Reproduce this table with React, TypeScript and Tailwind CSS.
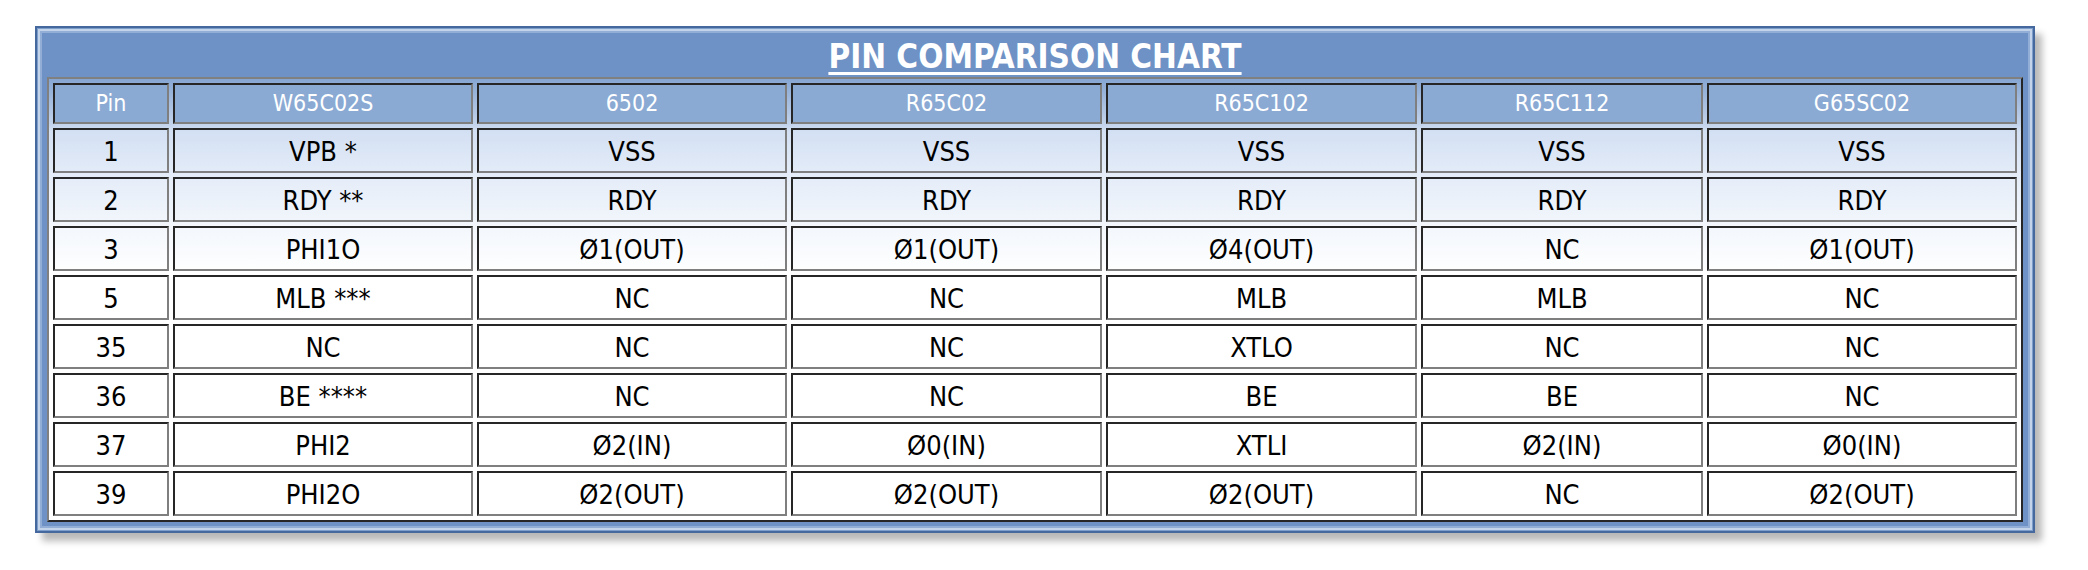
const columns = ["Pin", "W65C02S", "6502", "R65C02", "R65C102", "R65C112", "G65SC02"]
const widths = ["w-[116px]", "w-[300px]", "w-[310px]", "w-[311px]", "w-[311px]", "w-[282px]", "w-[310px]"]

const rows = [
     ["1", "VPB *", "VSS", "VSS", "VSS", "VSS", "VSS"],
     ["2", "RDY **", "RDY", "RDY", "RDY", "RDY", "RDY"],
     ["3", "PHI1O", "Ø1(OUT)", "Ø1(OUT)", "Ø4(OUT)", "NC", "Ø1(OUT)"],
     ["5", "MLB ***", "NC", "NC", "MLB", "MLB", "NC"],
     ["35", "NC", "NC", "NC", "XTLO", "NC", "NC"],
     ["36", "BE ****", "NC", "NC", "BE", "BE", "NC"],
     ["37", "PHI2", "Ø2(IN)", "Ø0(IN)", "XTLI", "Ø2(IN)", "Ø0(IN)"],
     ["39", "PHI2O", "Ø2(OUT)", "Ø2(OUT)", "Ø2(OUT)", "NC", "Ø2(OUT)"],
]

const cellBorder = "border-2 border-t-[#262626] border-l-[#262626] border-r-[#7f7f7f] border-b-[#7f7f7f]"

export default function App() {
     return (
          <div className="w-[2088px] h-[570px] bg-white pt-[26px] pl-[35px] font-['DejaVu_Sans_Condensed','DejaVu_Sans',sans-serif]">
               <div className="w-[2000px] h-[507px] border-2 border-[#45699f] bg-[#6e92c5] px-[10px] pb-[9px] shadow-[inset_0_0_0_1px_#7d9dcb,inset_0_0_0_3px_#c2d3ea,inset_0_0_0_5px_#93aed6,7px_8px_7px_rgba(0,0,0,0.28)]">
                    <div className="h-[49px] pt-[7px] flex items-center justify-center">
                         <h1 className="text-white font-bold text-[33px] leading-none underline decoration-[3px] underline-offset-[4px]">
                              PIN COMPARISON CHART
                         </h1>
                    </div>
                    <table className="table-fixed w-[1976px] border-separate border-spacing-[4px] border-2 border-t-[#808080] border-l-[#808080] border-r-[#262626] border-b-[#262626] bg-[linear-gradient(to_bottom,#86a6d2_0px,#c4d4ec_46px,#d3e0f3_52px,#e4ecf8_96px,#f3f7fc_148px,#ffffff_195px)]">
                         <colgroup>
                              {widths.map((w, i) => (
                                   <col key={i} className={w} />
                              ))}
                         </colgroup>
                         <thead>
                              <tr>
                                   {columns.map((c) => (
                                        <th key={c} className={`${cellBorder} h-[41px] p-0 bg-[#8aaad4] text-white font-normal text-[23px] leading-none text-center align-middle`}>
                                             {c}
                                        </th>
                                   ))}
                              </tr>
                         </thead>
                         <tbody>
                              {rows.map((r) => (
                                   <tr key={r[0]}>
                                        {r.map((v, i) => (
                                             <td key={i} className={`${cellBorder} h-[45px] p-0 pt-[2px] text-black text-[27px] leading-none text-center align-middle`}>
                                                  {v}
                                             </td>
                                        ))}
                                   </tr>
                              ))}
                         </tbody>
                    </table>
               </div>
          </div>
     )
}
